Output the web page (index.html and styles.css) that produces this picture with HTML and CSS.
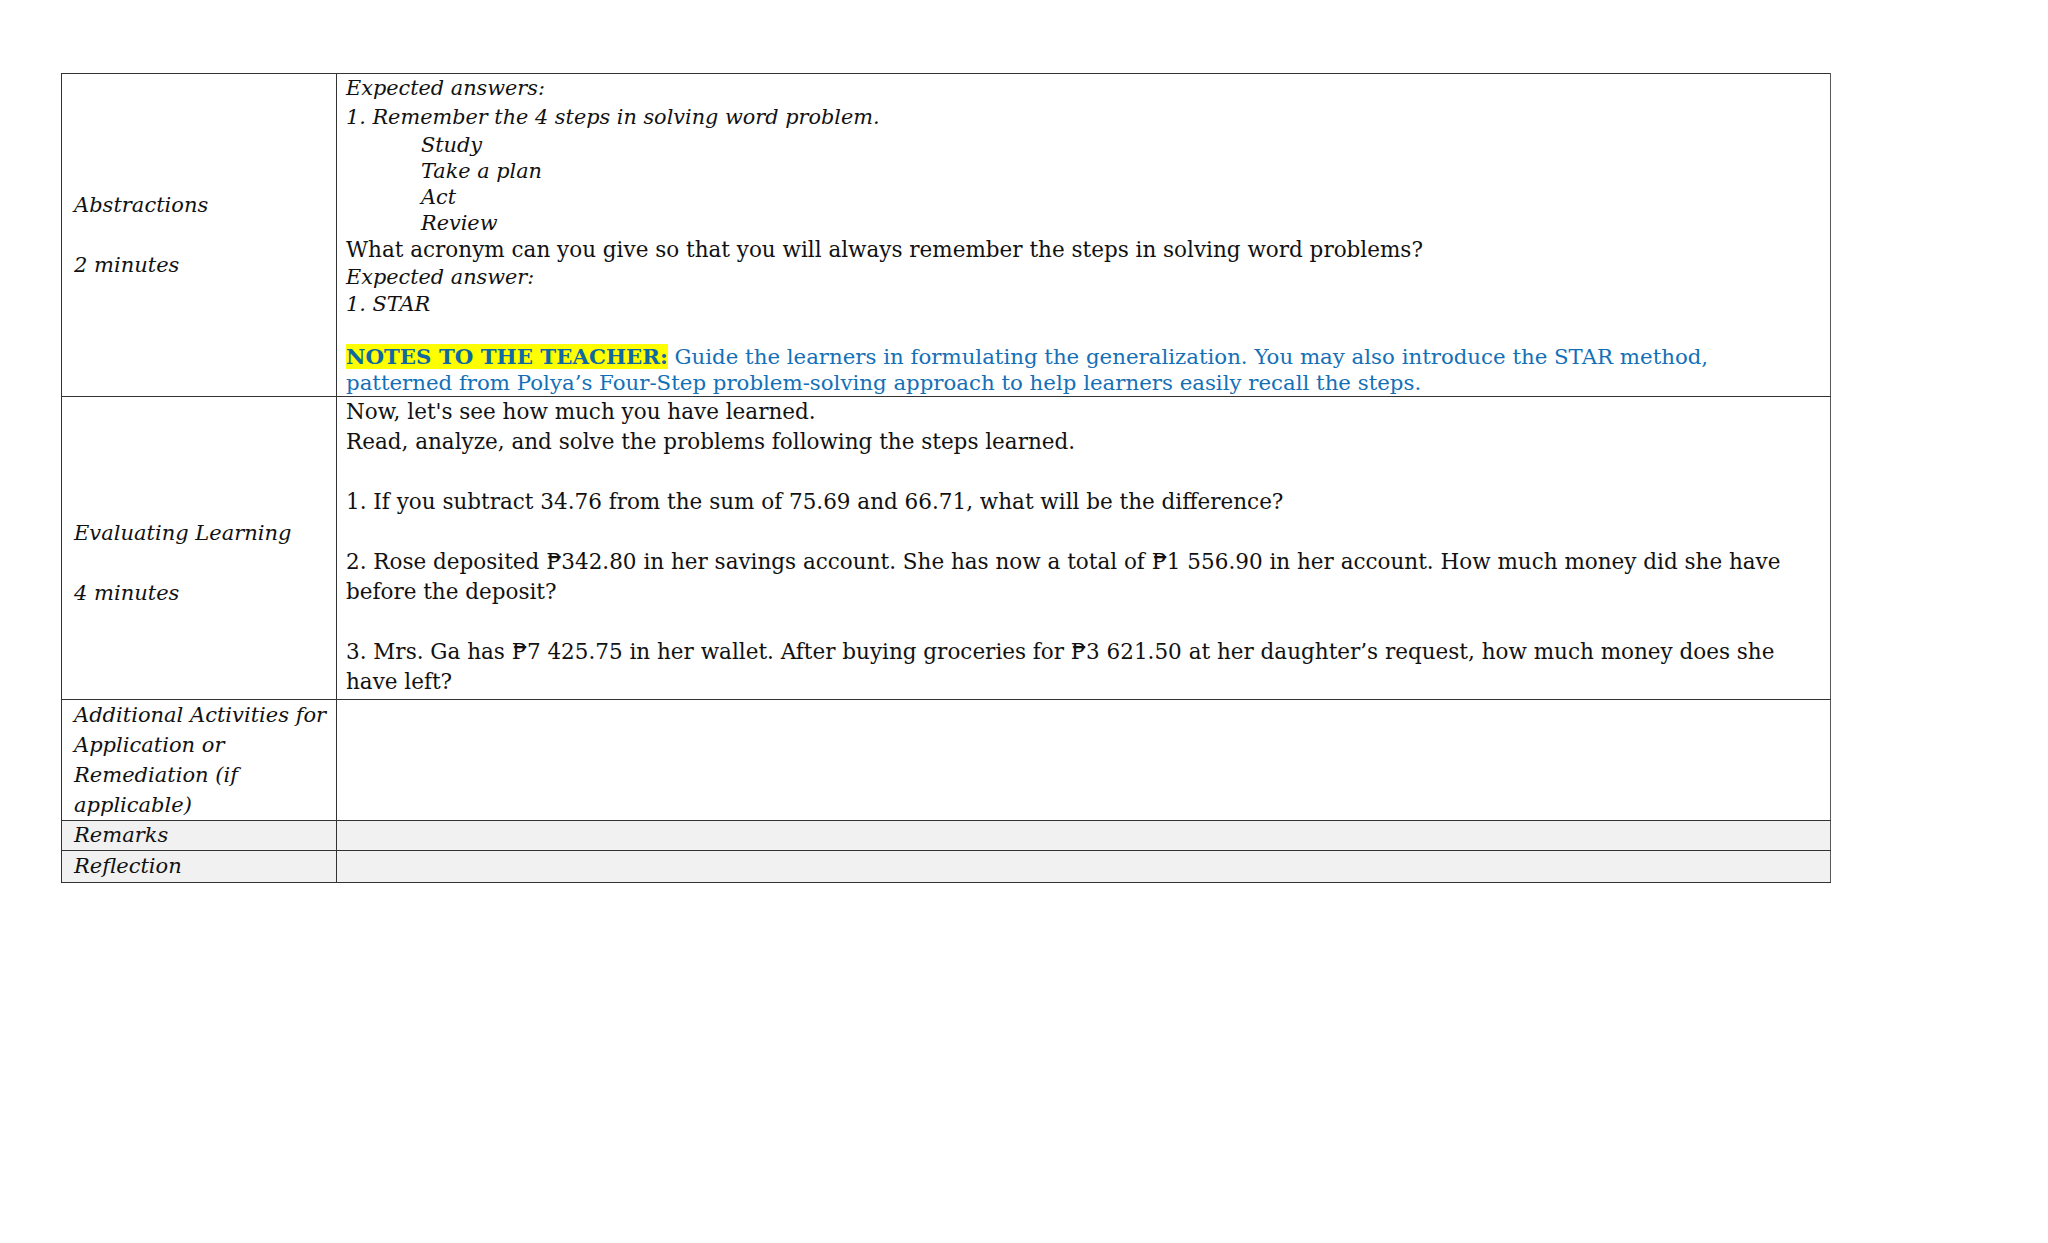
FILE: index.html
```html
<!DOCTYPE html>
<html lang="en">
<head>
<meta charset="UTF-8">
<title>Lesson plan - Abstractions and Evaluating Learning</title>
<link rel="stylesheet" href="styles.css">
</head>
<body>

<div id="page">

<table class="plan">
<tr>
<td class="label mid">
<div class="ll">Abstractions</div>
<div class="ll">&nbsp;</div>
<div class="ll">2 minutes</div>
</td>
<td class="body">
<div class="l29 it">Expected answers:</div>
<div class="l29 it">1. Remember the 4 steps in solving word problem.</div>
<div class="step it">Study</div>
<div class="step it">Take a plan</div>
<div class="step it">Act</div>
<div class="step it">Review</div>
<div class="l27">What acronym can you give so that you will always remember the steps in solving word problems?</div>
<div class="l28 it">Expected answer:</div>
<div class="l27 it">1. STAR</div>
<div class="l26">&nbsp;</div>
<div class="l26 note"><span class="hl">NOTES TO THE TEACHER:</span> Guide the learners in formulating the generalization. You may also introduce the STAR method,</div>
<div class="l26 note">patterned from Polya’s Four-Step problem-solving approach to help learners easily recall the steps.</div>
</td>
</tr>
<tr>
<td class="label mid evl">
<div class="ll">Evaluating Learning</div>
<div class="ll">&nbsp;</div>
<div class="ll">4 minutes</div>
</td>
<td class="body eval">
<div class="ll">Now, let's see how much you have learned.</div>
<div class="ll">Read, analyze, and solve the problems following the steps learned.</div>
<div class="ll">&nbsp;</div>
<div class="ll">1. If you subtract 34.76 from the sum of 75.69 and 66.71, what will be the difference?</div>
<div class="ll">&nbsp;</div>
<div class="ll">2. Rose deposited ₱342.80 in her savings account. She has now a total of ₱1 556.90 in her account. How much money did she have<br>before the deposit?</div>
<div class="ll">&nbsp;</div>
<div class="ll">3. Mrs. Ga has ₱7 425.75 in her wallet. After buying groceries for ₱3 621.50 at her daughter’s request, how much money does she<br>have left?</div>
</td>
</tr>
<tr>
<td class="label">
<div class="ll">Additional Activities for<br>Application or<br>Remediation (if<br>applicable)</div>
</td>
<td class="body"></td>
</tr>
<tr class="grey">
<td class="label"><div class="l29">Remarks</div></td>
<td class="body"></td>
</tr>
<tr class="grey">
<td class="label"><div class="l31">Reflection</div></td>
<td class="body"></td>
</tr>
</table>

</div><!-- page -->

</body>
</html>
```

FILE: styles.css
```css
body {
margin: 0;
padding: 0;
background: #fff;
color: #111;
font-family: "DejaVu Serif", "Liberation Serif", serif;
font-size: 21.5px;
}
#page {
padding: 73px 0 0 61px;
}
.plan {
width: 1770px;
border-collapse: collapse;
table-layout: fixed;
}
.plan td {
border: 1px solid #333;
padding: 0;
vertical-align: top;
}
.plan tr > td:last-child {
border-right-color: #5a5a5a;
}
.label {
width: 262px;
padding-left: 12px !important;
font-style: italic;
font-size: 21px;
}
.mid {
vertical-align: middle !important;
}
.evl {
padding-top: 29px !important;
}
.body {
padding-left: 9px !important;
white-space: nowrap;
}
.eval {
padding-bottom: 2px !important;
}
.it {
font-style: italic;
font-size: 20.8px;
}
.ll {
line-height: 30px;
}
.l26 {
line-height: 26px;
}
.l27 {
line-height: 27px;
}
.l28 {
line-height: 28px;
}
.l29 {
line-height: 29px;
}
.l31 {
line-height: 31px;
}
.step {
line-height: 26px;
padding-left: 75px;
}
.note {
color: #1470b6;
font-size: 21.3px;
}
.hl {
background: #ffff00;
color: #0f68a4;
font-weight: bold;
}
.grey td {
background: #f1f1f1;
}
```
